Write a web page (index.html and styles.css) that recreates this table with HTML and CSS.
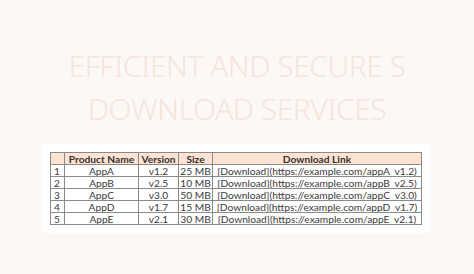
FILE: index.html
```html
<!DOCTYPE html>
<html lang="en">

<head>
    <meta charset="UTF-8">
    <meta name="viewport" content="width=device-width, initial-scale=1.0">
    <title>Efficient and Secure Download Services</title>
    <link rel="stylesheet" href="styles.css">
</head>

<body>
    <div class="page">
        <h1 class="title">EFFICIENT AND SECURE S<br>DOWNLOAD SERVICES</h1>

        <div class="sheet">
            <table class="grid">
                <thead>
                    <tr>
                        <th class="idx"></th>
                        <th class="col-name">Product Name</th>
                        <th class="col-ver">Version</th>
                        <th class="col-size">Size</th>
                        <th>Download Link</th>
                    </tr>
                </thead>
                <tbody>
                    <tr>
                        <td class="idx">1</td>
                        <td>AppA</td>
                        <td>v1.2</td>
                        <td>25 MB</td>
                        <td>[Download](https://example.com/appA_v1.2)</td>
                    </tr>
                    <tr>
                        <td class="idx">2</td>
                        <td>AppB</td>
                        <td>v2.5</td>
                        <td>10 MB</td>
                        <td>[Download](https://example.com/appB_v2.5)</td>
                    </tr>
                    <tr>
                        <td class="idx">3</td>
                        <td>AppC</td>
                        <td>v3.0</td>
                        <td>50 MB</td>
                        <td>[Download](https://example.com/appC_v3.0)</td>
                    </tr>
                    <tr>
                        <td class="idx">4</td>
                        <td>AppD</td>
                        <td>v1.7</td>
                        <td>15 MB</td>
                        <td>[Download](https://example.com/appD_v1.7)</td>
                    </tr>
                    <tr>
                        <td class="idx">5</td>
                        <td>AppE</td>
                        <td>v2.1</td>
                        <td>30 MB</td>
                        <td>[Download](https://example.com/appE_v2.1)</td>
                    </tr>
                </tbody>
            </table>
        </div>
    </div>
</body>

</html>
```

FILE: styles.css
```css
* {
    margin: 0;
    padding: 0;
    box-sizing: border-box;
}

body {
    width: 474px;
    height: 274px;
    background: #fcf8f6;
    font-family: 'Noto Sans', sans-serif;
    overflow: hidden;
}

.page {
    display: flex;
    flex-direction: column;
    align-items: center;
    padding-top: 44px;
}

.title {
    font-family: 'Noto Sans', sans-serif;
    font-weight: 300;
    font-size: 30px;
    line-height: 43px;
    color: #f4e4da;
    text-align: center;
    letter-spacing: -0.5px;
}

.sheet {
    margin-top: 14px;
    background: #fff;
    padding: 8px;
    width: 388px;
    margin-left: -2px;
}

.grid {
    width: 372px;
    table-layout: fixed;
    border-collapse: collapse;
    font-family: 'Lato', sans-serif;
    font-size: 10.2px;
    color: #3a3a3a;
}

.grid th,
.grid td {
    border: 1px solid #8a8a8a;
    height: 12px;
    line-height: 10px;
    text-align: center;
    white-space: nowrap;
    overflow: hidden;
    padding: 0 1px;
}

.grid th {
    background: #fce3d3;
    font-weight: 700;
    color: #3a302b;
}

.grid .idx {
    width: 14px;
    text-align: left;
    padding-left: 3px;
}

.col-name {
    width: 74px;
}

.col-ver {
    width: 40px;
}

.col-size {
    width: 34px;
}
```
